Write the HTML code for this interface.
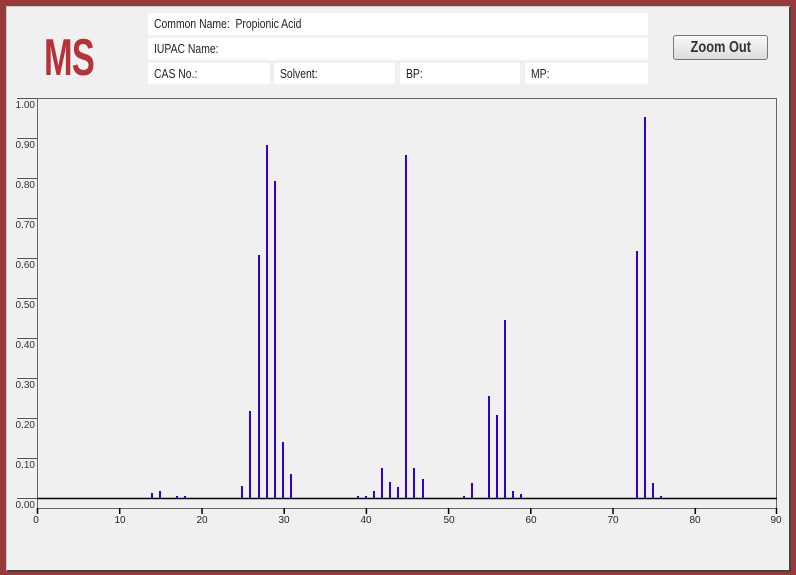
<!DOCTYPE html>
<html><head><style>
body{margin:0;width:796px;height:575px;background:#963a3c;overflow:hidden;font-family:"Liberation Sans",sans-serif}
#p{position:absolute;left:6px;top:6px;width:782px;height:563px;background:#f0f0f0;border-right:2px solid #444;border-bottom:2px solid #444;border-top:1px solid #ccc;border-left:1px solid #ccc}
.b{position:absolute;background:#fff;font-size:13px;color:#222;line-height:22px;padding-left:6px;box-sizing:border-box;white-space:nowrap}
.b span{display:inline-block;transform:scaleX(0.8);transform-origin:left center}
</style></head><body>
<div id="p"></div>
<div style="position:absolute;left:44px;top:28px;font:bold 52px 'Liberation Sans',sans-serif;color:#b5343a;transform:scaleX(0.66);transform-origin:left top;letter-spacing:-1px">MS</div>
<div class="b" style="left:148px;top:13px;width:500px;height:22px"><span>Common Name:&nbsp; Propionic Acid</span></div>
<div class="b" style="left:148px;top:38px;width:500px;height:22px"><span>IUPAC Name:</span></div>
<div class="b" style="left:148px;top:63px;width:122px;height:21px"><span>CAS No.:</span></div>
<div class="b" style="left:274px;top:63px;width:121px;height:21px"><span>Solvent:</span></div>
<div class="b" style="left:400px;top:63px;width:120px;height:21px"><span>BP:</span></div>
<div class="b" style="left:525px;top:63px;width:123px;height:21px"><span>MP:</span></div>
<div style="position:absolute;left:673px;top:35px;width:93px;height:23px;border:1px solid #777;border-radius:3px;background:linear-gradient(#f8f8f8,#dcdcdc);text-align:center;line-height:23px;color:#333"><span style="display:inline-block;font:bold 16px 'Liberation Sans',sans-serif;transform:scaleX(0.8)">Zoom Out</span></div>
<svg style="position:absolute;left:0;top:0" width="796" height="575">
<rect x="37.5" y="98.5" width="739" height="410" fill="none" stroke="#666"/>
<line x1="37" y1="498.5" x2="777" y2="498.5" stroke="#000" stroke-width="1.5"/>
<g stroke="#555"><line x1="17" y1="98.5" x2="37" y2="98.5"/><line x1="17" y1="138.5" x2="37" y2="138.5"/><line x1="17" y1="178.5" x2="37" y2="178.5"/><line x1="17" y1="218.5" x2="37" y2="218.5"/><line x1="17" y1="258.5" x2="37" y2="258.5"/><line x1="17" y1="298.5" x2="37" y2="298.5"/><line x1="17" y1="338.5" x2="37" y2="338.5"/><line x1="17" y1="378.5" x2="37" y2="378.5"/><line x1="17" y1="418.5" x2="37" y2="418.5"/><line x1="17" y1="458.5" x2="37" y2="458.5"/><line x1="17" y1="498.5" x2="37" y2="498.5"/></g>
<g font-family="Liberation Sans" font-size="10" fill="#333" text-anchor="end">
<text x="35" y="108">1.00</text><text x="35" y="148">0.90</text><text x="35" y="188">0.80</text><text x="35" y="228">0.70</text><text x="35" y="268">0.60</text><text x="35" y="308">0.50</text><text x="35" y="348">0.40</text><text x="35" y="388">0.30</text><text x="35" y="428">0.20</text><text x="35" y="468">0.10</text><text x="35" y="508">0.00</text></g>
<g stroke="#000" stroke-width="1.5">
<line x1="37.5" y1="508" x2="37.5" y2="514"/><line x1="119.7" y1="508" x2="119.7" y2="514"/><line x1="202" y1="508" x2="202" y2="514"/><line x1="284.2" y1="508" x2="284.2" y2="514"/><line x1="366.4" y1="508" x2="366.4" y2="514"/><line x1="448.6" y1="508" x2="448.6" y2="514"/><line x1="530.8" y1="508" x2="530.8" y2="514"/><line x1="613" y1="508" x2="613" y2="514"/><line x1="695.3" y1="508" x2="695.3" y2="514"/><line x1="776.5" y1="508" x2="776.5" y2="514"/></g>
<g font-family="Liberation Sans" font-size="10" fill="#223" text-anchor="middle">
<text x="36" y="523">0</text><text x="120" y="523">10</text><text x="202" y="523">20</text><text x="284" y="523">30</text><text x="366" y="523">40</text><text x="449" y="523">50</text><text x="531" y="523">60</text><text x="613" y="523">70</text><text x="695" y="523">80</text><text x="776" y="523">90</text></g>
<g stroke="#3300cc" stroke-width="2">
<line x1="152" y1="498" x2="152" y2="493"/><line x1="160" y1="498" x2="160" y2="491"/><line x1="177" y1="498" x2="177" y2="496"/><line x1="185" y1="498" x2="185" y2="496"/>
<line x1="242" y1="498" x2="242" y2="486"/><line x1="250" y1="498" x2="250" y2="411"/><line x1="259" y1="498" x2="259" y2="255"/><line x1="267" y1="498" x2="267" y2="145"/><line x1="275" y1="498" x2="275" y2="181"/><line x1="283" y1="498" x2="283" y2="442"/><line x1="291" y1="498" x2="291" y2="474"/>
<line x1="358" y1="498" x2="358" y2="496"/><line x1="366" y1="498" x2="366" y2="496"/><line x1="374" y1="498" x2="374" y2="491"/><line x1="382" y1="498" x2="382" y2="468"/><line x1="390" y1="498" x2="390" y2="482"/><line x1="398" y1="498" x2="398" y2="487"/><line x1="406" y1="498" x2="406" y2="155"/><line x1="414" y1="498" x2="414" y2="468"/><line x1="423" y1="498" x2="423" y2="479"/>
<line x1="464" y1="498" x2="464" y2="496"/><line x1="472" y1="498" x2="472" y2="483"/><line x1="489" y1="498" x2="489" y2="396"/><line x1="497" y1="498" x2="497" y2="415"/><line x1="505" y1="498" x2="505" y2="320"/><line x1="513" y1="498" x2="513" y2="491"/><line x1="521" y1="498" x2="521" y2="494"/>
<line x1="637" y1="498" x2="637" y2="251"/><line x1="645" y1="498" x2="645" y2="117"/><line x1="653" y1="498" x2="653" y2="483"/><line x1="661" y1="498" x2="661" y2="496"/></g>
</svg>
</body></html>
